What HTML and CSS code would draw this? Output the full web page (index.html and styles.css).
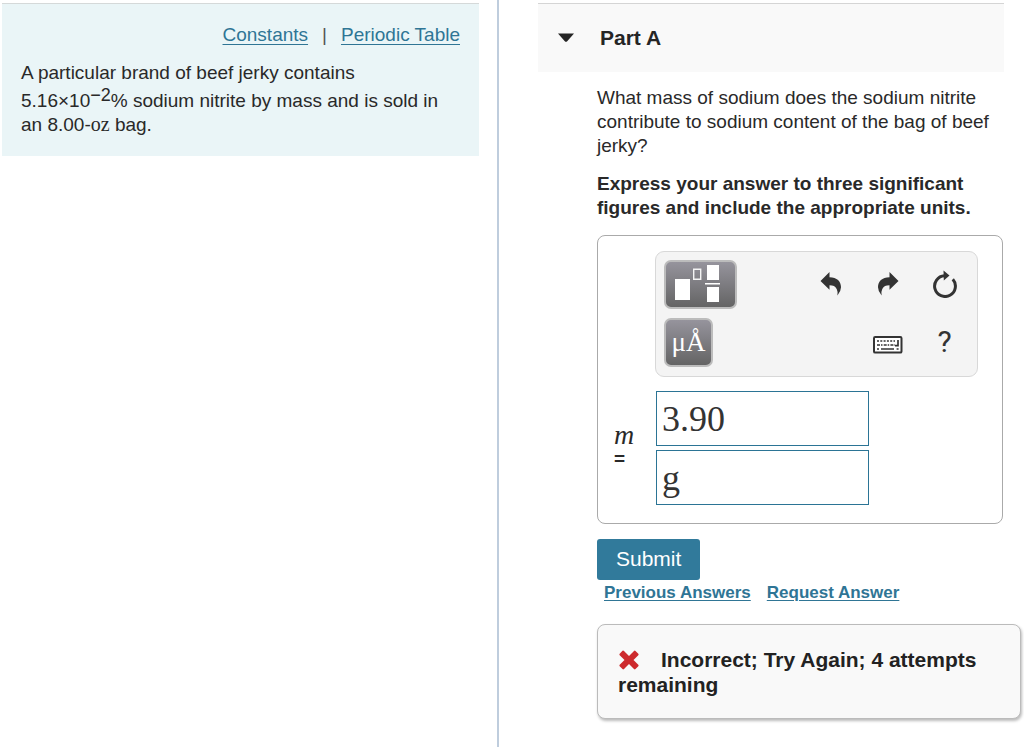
FILE: index.html
```html
<!DOCTYPE html>
<html lang="en">
<head>
<meta charset="utf-8">
<meta name="viewport" content="width=device-width, initial-scale=1">
<title>Part A</title>
<link rel="stylesheet" href="styles.css">
</head>
<body>
<div class="page">
  <aside class="side">
    <section class="problem">
      <nav class="refs">
        <a href="#constants">Constants</a>
        <span class="divider">|</span>
        <a href="#periodic-table">Periodic Table</a>
      </nav>
      <p class="problem-text">A particular brand of beef jerky contains 5.16×10<sup>−2</sup>% sodium nitrite by mass and is sold in an 8.00-<span class="unit">oz</span> bag.</p>
    </section>
  </aside>
  <main class="main">
    <header class="part-head">
      <button class="toggle" type="button" aria-label="Collapse Part A">
        <svg width="16" height="10" viewBox="0 0 16 10"><path d="M0 0.5H16L9.2 8.2Q8 9.5 6.8 8.2Z" fill="#252525"/></svg>
      </button>
      <h1 class="part-title">Part A</h1>
    </header>
    <div class="part-body">
      <p class="question">What mass of sodium does the sodium nitrite contribute to sodium content of the bag of beef jerky?</p>
      <p class="instruction">Express your answer to three significant figures and include the appropriate units.</p>
      <form class="answer">
        <div class="toolbar">
          <div class="tool-row">
            <button class="tool wide" type="button" aria-label="Templates">
              <svg width="69" height="45" viewBox="0 0 69 45"><g fill="#fff"><path d="M9 17h15v21H9zM41 3h12v15H41zM41 25h12v15H41zM39 21h15v1.5H39z"/></g><path d="M27.7 7.2h7v10h-7z" fill="none" stroke="#f4f4f4" stroke-width="1.4"/></svg>
            </button>
            <div class="icons">
              <button class="icon" type="button" aria-label="Undo">
                <svg width="22" height="26" viewBox="0 0 22 26"><path d="M0.5 10L9.5 1V6.2C17 6.2 21 10.5 21 16.2Q21 20.4 17.4 24.4Q18.1 20.7 16.7 18C15.3 15.3 13.2 14.3 9.500 14.3V18.8Z" fill="#333"/></svg>
              </button>
              <button class="icon" type="button" aria-label="Redo">
                <svg width="22" height="26" viewBox="0 0 22 26"><path d="M21.500 10L12.500 1V6.2C5 6.2 1 10.5 1 16.2Q1 20.4 4.6 24.4Q3.9 20.7 5.3 18C6.7 15.3 8.8 14.3 12.500 14.3V18.8Z" fill="#333"/></svg>
              </button>
              <button class="icon" type="button" aria-label="Reset">
                <svg width="26" height="28" viewBox="0 0 26 28"><path d="M20.8 9.2A10.4 10.4 0 1 1 12.500 5.7" fill="none" stroke="#333" stroke-width="3"/><path d="M11.500 0.5L17.500 5.4L11.800 10.4Z" fill="#333"/></svg>
              </button>
            </div>
          </div>
          <div class="tool-row">
            <button class="tool" type="button" aria-label="Units">μÅ</button>
            <div class="icons">
              <button class="icon" type="button" aria-label="Keyboard">
                <svg class="keyboard" width="30" height="18" viewBox="0 0 30 18"><rect x="1" y="1" width="27.5" height="15.6" rx="1.2" fill="#fff" stroke="#333" stroke-width="2"/><g fill="none" stroke="#333" stroke-width="1.7"><path d="M4 5h18" stroke-dasharray="2 1.3"/><path d="M4 9h18" stroke-dasharray="3 1 1.5 1.2"/><path d="M25 4v5.6h-3M4 13h2M8 13h13M23.6 13h2"/></g></svg>
              </button>
              <button class="icon help" type="button" aria-label="Help">?</button>
            </div>
          </div>
        </div>
        <div class="entry">
          <div class="symbol"><i>m</i><span>=</span></div>
          <div class="fields">
            <input class="field" type="text" aria-label="Value of m" value="3.90">
            <input class="field" type="text" aria-label="Units of m" value="g">
          </div>
        </div>
      </form>
      <button class="submit" type="button">Submit</button>
      <div class="links">
        <a href="#previous">Previous Answers</a>
        <a href="#request">Request Answer</a>
      </div>
      <div class="feedback" role="status">
        <svg class="cross" width="22" height="20" viewBox="0 0 22 20"><path d="M4.5 0.8Q5.200 0.3 6 0.9L11 6L16 0.9Q16.800 0.3 17.500 0.9L20.300 3.700Q21 4.500 20.300 5.200L15.500 10L20.300 14.800Q21 15.500 20.300 16.300L17.500 19.100Q16.800 19.700 16 19.100L11 14L6 19.100Q5.200 19.700 4.500 19.100L1.700 16.300Q1 15.500 1.700 14.800L6.500 10L1.700 5.200Q1 4.500 1.700 3.700Z" fill="#cd2a2d"/></svg>Incorrect; Try Again; 4 attempts remaining
      </div>
    </div>
  </main>
</div>
</body>
</html>
```
FILE: styles.css
```css
* { box-sizing: border-box; }
body {
  margin: 0;
  background: #fff;
  color: #292929;
  font: 19px/24px "Liberation Sans", Arial, sans-serif;
}
button, input { margin: 0; font: inherit; color: inherit; }
a { color: #2f7595; text-decoration-thickness: 1px; text-underline-offset: 3px; }
p, h1 { margin: 0; }
svg { display: block; }

.page {
  display: grid;
  grid-template-columns: 499fr 525fr;
  min-height: 100vh;
}
.side {
  padding: 3px 18px 0 2px;
  border-right: 2px solid #bfcddd;
}
.problem {
  padding: 19px;
  border-top: 1px solid #d5d9d9;
  background: #eaf5f7;
}
.refs {
  display: flex;
  justify-content: flex-end;
  gap: 14px;
  margin-bottom: 14px;
}
.divider { color: #555; }
.problem-text sup {
  font-size: 18px;
  line-height: 20px;
  vertical-align: 6px;
}
.unit { font: 20px/20px "Liberation Serif", "Times New Roman", serif; }

.main { padding: 3px 3px 24px 39px; }
.part-head {
  display: flex;
  align-items: center;
  gap: 26px;
  height: 69px;
  margin-right: 17px;
  padding-left: 20px;
  border-top: 1px solid #d5d5d5;
  background: #f9f9f9;
}
.toggle {
  padding: 0;
  border: 0;
  background: none;
}
.part-title { font-size: 21px; line-height: 24px; color: #252525; }
.part-body { padding: 14px 0 0 59px; }
.question { margin: 0 18px 14px 0; }
.instruction { margin: 0 18px 15px 0; font-weight: bold; }

.answer {
  margin: 0 18px 15px 0;
  padding: 15px 24px 18px 16px;
  border: 1px solid #aaa;
  border-radius: 8px;
}
.toolbar {
  display: flex;
  flex-direction: column;
  gap: 9px;
  margin: 0 0 14px 41px;
  padding: 8px 8px 9px;
  border: 1px solid #d8d8d8;
  border-radius: 9px;
  background: #f4f4f4;
}
.tool-row { display: flex; justify-content: space-between; }
.tool {
  width: 49px;
  height: 49px;
  padding: 0;
  border: 2px solid #bcbcbc;
  border-radius: 7px;
  background: linear-gradient(#98969f, #626262) border-box;
  color: #fff;
  font: 27px/45px "Liberation Serif", "Times New Roman", serif;
}
.wide { width: 73px; }
.icons { display: flex; gap: 20px; margin-right: 6px; }
.icon {
  display: grid;
  place-items: center;
  width: 37px;
  height: 48px;
  padding: 0;
  border: 0;
  background: none;
  color: #333;
}
.keyboard { margin-top: 6px; }
.help { font: 30px/46px Roboto, sans-serif; }

.entry { display: flex; gap: 21px; }
.symbol {
  display: flex;
  flex-direction: column;
  width: 21px;
  padding-top: 32px;
  font-weight: bold;
}
.symbol i { font: italic 28px/24px "Liberation Serif", "Times New Roman", serif; }
.fields { display: grid; gap: 4px; }
.field {
  width: 213px;
  height: 55px;
  padding: 0 5px;
  border: 1px solid #2b7495;
  border-radius: 0;
  outline: 0;
  background: #fff;
  color: #333;
  font: 36px/53px "Liberation Serif", "Times New Roman", serif;
}

.submit {
  display: block;
  margin-bottom: 1px;
  padding: 8px 19px 9px;
  border: 0;
  border-radius: 3px;
  background: #317a9b;
  color: #fff;
  font-size: 21px;
}
.links {
  display: flex;
  gap: 16px;
  margin: 0 0 19px 7px;
  font-size: 17px;
  font-weight: bold;
}
.links a { text-underline-offset: 2px; }
.feedback {
  padding: 22px 20px 21px;
  border: 1px solid #bbb;
  border-radius: 8px;
  background: #f9f9f9;
  box-shadow: 1px 2px 3px #bbb;
  color: #222;
  font-size: 21px;
  line-height: 25px;
  font-weight: bold;
}
.cross {
  display: inline-block;
  margin-right: 21px;
  vertical-align: -3px;
}
```
